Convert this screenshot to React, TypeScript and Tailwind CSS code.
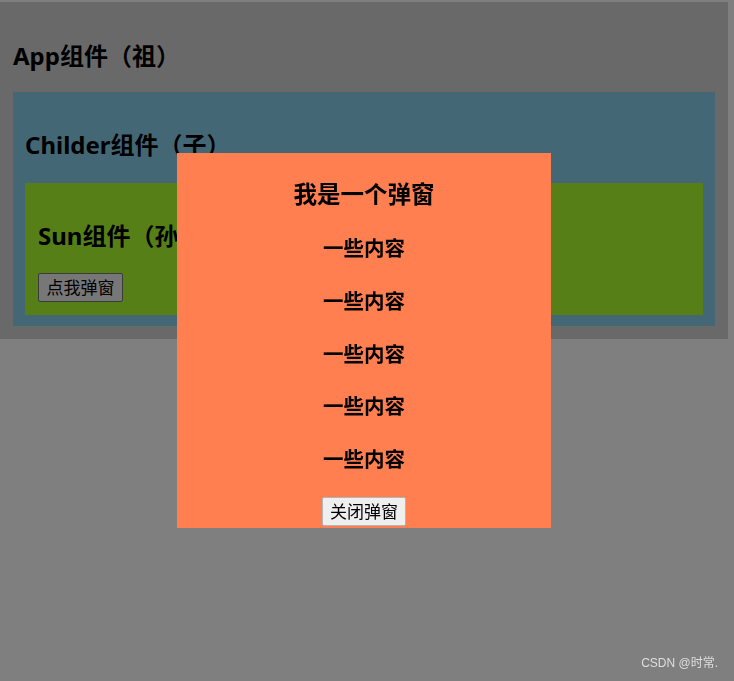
import { useState } from "react"

const font = "font-['Noto_Sans','Noto_Sans_CJK_SC',sans-serif]"

function Sun({ onOpen }: { onOpen: () => void }) {
    return (
        <div className="mt-[22px] h-[132px] bg-[#adff2f] px-[13px] pt-[37px]">
            <h2 className="text-[24px] font-bold leading-[32px] text-black">Sun组件（孙）</h2>
            <button
                className="mt-[21px] h-[29px] w-[85px] rounded-[2px] border border-[#767676] bg-[#efefef] text-[17px] leading-[27px] text-black"
                onClick={onOpen}
            >
                点我弹窗
            </button>
        </div>
    )
}

function Childer({ onOpen }: { onOpen: () => void }) {
    return (
        <div className="mt-[20px] h-[234px] bg-[#87ceeb] px-[12px] pt-[37px]">
            <h2 className="text-[24px] font-bold leading-[32px] text-black">Childer组件（子）</h2>
            <Sun onOpen={onOpen} />
        </div>
    )
}

function Modal({ onClose }: { onClose: () => void }) {
    const lines = ["一些内容", "一些内容", "一些内容", "一些内容", "一些内容"]
    return (
        <div className="fixed inset-0 bg-[rgba(0,0,0,0.5)]">
            <div className="absolute left-[177px] top-[153px] flex h-[375px] w-[374px] flex-col items-center bg-[#ff7f50] pt-[25px]">
                <h2 className="text-[23.5px] font-bold leading-[32px] text-black">我是一个弹窗</h2>
                {lines.map((t, i) => (
                    <h3
                        key={i}
                        className={
                            i === 0
                                ? "mt-[24px] text-[20.5px] font-bold leading-[28px] text-black"
                                : "mt-[24.75px] text-[20.5px] font-bold leading-[28px] text-black"
                        }
                    >
                        {t}
                    </h3>
                ))}
                <button
                    className="mt-[24px] h-[29px] w-[84px] rounded-[2px] border border-[#b5b5b5] bg-[#efefef] text-[17px] leading-[27px] text-black"
                    onClick={onClose}
                >
                    关闭弹窗
                </button>
            </div>
            <span className="absolute bottom-[9px] right-[16px] font-['Liberation_Sans','Noto_Sans_CJK_SC',sans-serif] text-[12px] text-[#dedede]">
                CSDN @时常.
            </span>
        </div>
    )
}

export default function App() {
    const [open, setOpen] = useState(true)

    return (
        <div className={`min-h-[681px] bg-white pt-[2px] ${font}`}>
            <div className="h-[337px] w-[728px] bg-[#d3d3d3] px-[13px] pt-[38px]">
                <h2 className="text-[24px] font-bold leading-[32px] text-black">App组件（祖）</h2>
                <Childer onOpen={() => setOpen(true)} />
            </div>
            {open && <Modal onClose={() => setOpen(false)} />}
        </div>
    )
}
